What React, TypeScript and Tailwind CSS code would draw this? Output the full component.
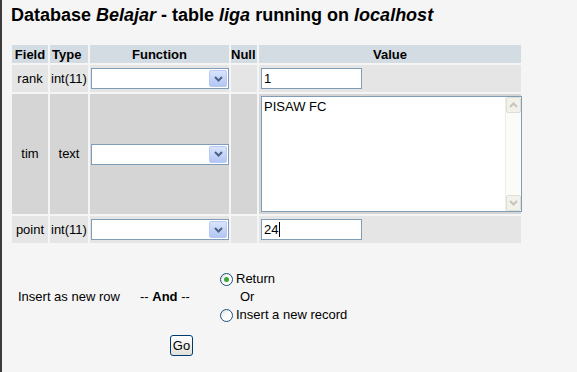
import React from "react";

function Chevron({ color = "#4d6185", up = false }: { color?: string; up?: boolean }) {
  return (
    <svg width="9" height="6" viewBox="0 0 9 6">
      <path
        d={up ? "M1 5 L4.5 1.5 L8 5" : "M1 1 L4.5 4.5 L8 1"}
        fill="none"
        stroke={color}
        strokeWidth="2"
      />
    </svg>
  );
}

function XPSelect() {
  return (
    <div className="w-[138px] h-[21px] border border-[#7f9db9] bg-white flex justify-end items-stretch p-[1px]">
      <div className="w-[18px] rounded-[2px] border border-[#b9c9ef] bg-gradient-to-b from-[#d9e4fd] to-[#b2c6f4] flex items-center justify-center">
        <Chevron />
      </div>
    </div>
  );
}

function XPInput({ value, caret = false }: { value: string; caret?: boolean }) {
  return (
    <div className="w-[101px] h-[21px] border border-[#7f9db9] bg-white flex items-center pl-[2px] text-[13px] leading-none">
      <span>{value}</span>
      {caret && <span className="inline-block w-[1px] h-[15px] bg-black ml-[1px]" />}
    </div>
  );
}

function Radio({ checked }: { checked?: boolean }) {
  return (
    <div className="w-[13px] h-[13px] rounded-full border border-[#1c5180] bg-gradient-to-br from-[#dcdcd7] via-white to-white flex items-center justify-center">
      {checked && <div className="w-[5px] h-[5px] rounded-full bg-[#3ea53e]" />}
    </div>
  );
}

export default function App() {
  return (
    <div className="w-[577px] h-[372px] bg-[#f5f5f5] border-l-2 border-[#3c3c3c] font-['Liberation_Sans',Arial,sans-serif] text-[13px] text-black overflow-hidden">
      <h2 className="pl-[9px] pt-[5px] text-[18px] font-bold leading-[20px]">
        Database <i>Belajar</i> - table <i>liga</i> running on <i>localhost</i>
      </h2>
      <table className="mt-[18px] ml-[8px] border-separate border-spacing-[2px] table-fixed w-[513px]">
        <colgroup>
          <col className="w-[36px]" />
          <col className="w-[38px]" />
          <col className="w-[139px]" />
          <col className="w-[26px]" />
          <col className="w-[262px]" />
        </colgroup>
        <thead>
          <tr className="h-[18px]">
            <th className="bg-[#d3dce3] px-[2px] text-center font-bold leading-[15px]">Field</th>
            <th className="bg-[#d3dce3] px-[2px] text-left font-bold leading-[15px]">Type</th>
            <th className="bg-[#d3dce3] px-[2px] text-center font-bold leading-[15px]">Function</th>
            <th className="bg-[#d3dce3] px-0 text-left font-bold leading-[15px]">Null</th>
            <th className="bg-[#d3dce3] px-[2px] text-center font-bold leading-[15px]">Value</th>
          </tr>
        </thead>
        <tbody>
          <tr className="h-[27px]">
            <td className="bg-[#e5e5e5] text-center px-[1px]">rank</td>
            <td className="bg-[#e5e5e5] px-[1px]">int(11)</td>
            <td className="bg-[#e5e5e5] px-[1px]"><XPSelect /></td>
            <td className="bg-[#e5e5e5]"></td>
            <td className="bg-[#e5e5e5] px-[2px]"><XPInput value="1" /></td>
          </tr>
          <tr className="h-[120px]">
            <td className="bg-[#d5d5d5] text-center px-[1px]">tim</td>
            <td className="bg-[#d5d5d5] text-center px-[1px]">text</td>
            <td className="bg-[#d5d5d5] px-[1px]"><XPSelect /></td>
            <td className="bg-[#d5d5d5]"></td>
            <td className="bg-[#d5d5d5] px-[2px]">
              <div className="w-[261px] h-[116px] border border-[#7f9db9] bg-white flex">
                <div className="flex-1 pl-[2px] pt-[2px] text-[13px] leading-[15px]">PISAW FC</div>
                <div className="w-[16px] bg-[#fbfbf8] border-l border-[#eeede5] flex flex-col justify-between">
                  <div className="h-[16px] rounded-[2px] border border-[#e0dfd6] bg-[#f2f1ea] flex items-center justify-center">
                    <Chevron color="#c6c5bb" up />
                  </div>
                  <div className="h-[16px] rounded-[2px] border border-[#e0dfd6] bg-[#f2f1ea] flex items-center justify-center">
                    <Chevron color="#c6c5bb" />
                  </div>
                </div>
              </div>
            </td>
          </tr>
          <tr className="h-[27px]">
            <td className="bg-[#e5e5e5] text-center px-[1px]">point</td>
            <td className="bg-[#e5e5e5] px-[1px]">int(11)</td>
            <td className="bg-[#e5e5e5] px-[1px]"><XPSelect /></td>
            <td className="bg-[#e5e5e5]"></td>
            <td className="bg-[#e5e5e5] px-[2px]"><XPInput value="24" caret /></td>
          </tr>
        </tbody>
      </table>
      <div className="mt-[25px] flex items-center">
        <div className="pl-[16px] w-[138px]">Insert as new row</div>
        <div className="w-[80px]">
          -- <b>And</b> --
        </div>
        <div className="flex flex-col">
          <div className="flex items-center gap-[3px] h-[18px]">
            <Radio checked />
            <span>Return</span>
          </div>
          <div className="h-[18px] pl-[20px] leading-[18px]">Or</div>
          <div className="flex items-center gap-[3px] h-[18px]">
            <Radio />
            <span>Insert a new record</span>
          </div>
        </div>
      </div>
      <div className="mt-[11px] pl-[168px]">
        <button className="w-[23px] h-[21px] rounded-[3px] border border-[#003c74] bg-gradient-to-b from-white to-[#e3e1d8] text-[13px] leading-none flex items-center justify-center">
          Go
        </button>
      </div>
    </div>
  );
}
